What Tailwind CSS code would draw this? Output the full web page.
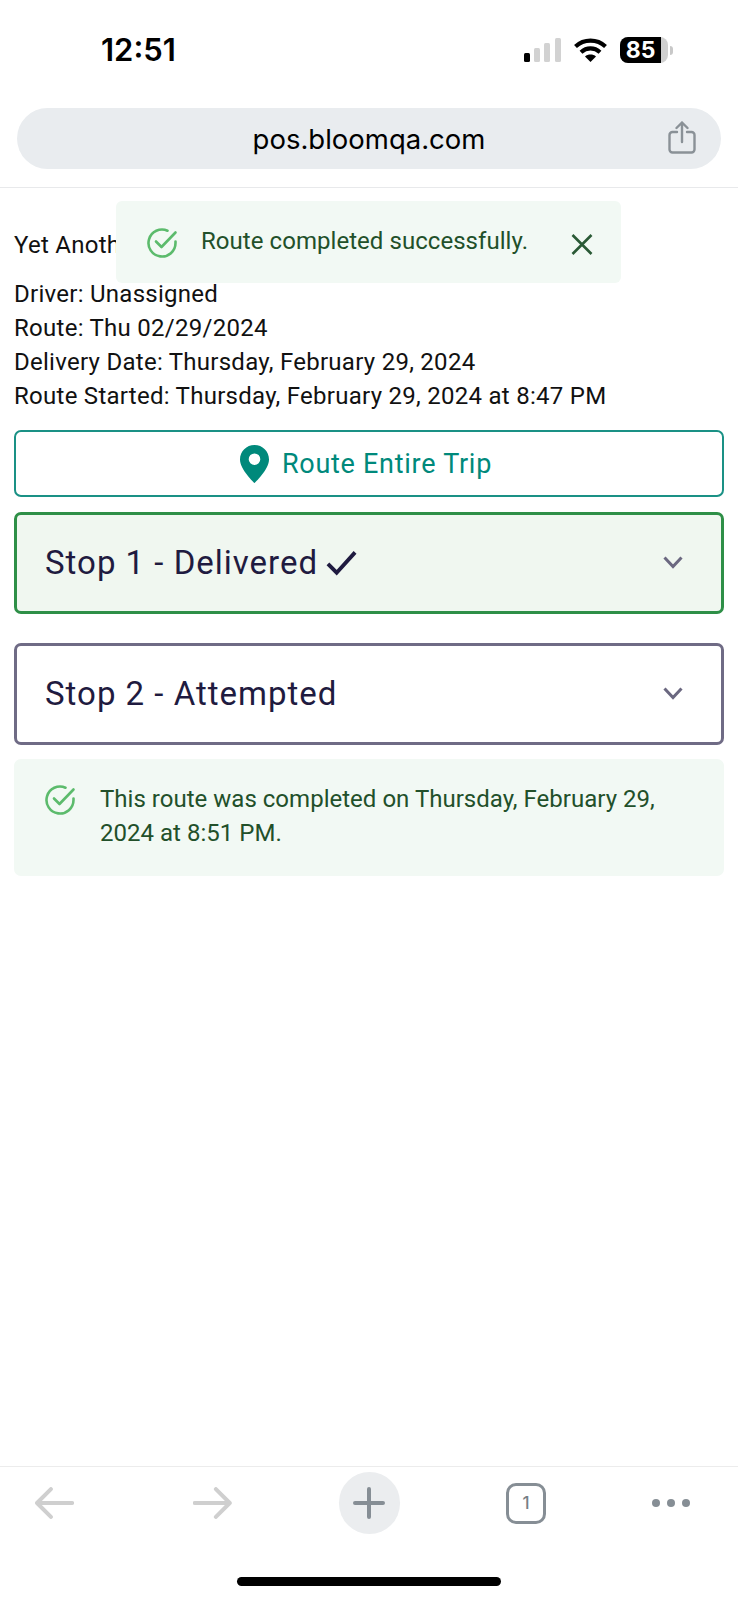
<!DOCTYPE html>
<html lang="en">
<head>
  <meta charset="utf-8">
  <meta name="viewport" content="width=device-width,initial-scale=1">
  <script src="https://cdn.jsdelivr.net/npm/@tailwindcss/browser@4"></script>
  <title>Route</title>
</head>
<body class="bg-white">
  <div class="relative flex h-[1600px] w-[738px] flex-col overflow-hidden font-['Roboto',sans-serif]">
    <!-- status bar -->
    <div class="flex h-[108px] shrink-0 items-start justify-between pt-[32px] pl-[101px] pr-[65px]">
      <span class="font-['Inter',sans-serif] text-[31px] leading-[36px] font-semibold text-black">12:51</span>
      <div class="mt-[5px] flex items-center">
        <svg width="37" height="24" viewBox="0 0 37 24">
          <rect x="0" y="15" width="6" height="9" rx="1.5" fill="#000"/>
          <rect x="10" y="10" width="6" height="14" rx="1.5" fill="#d2d2d2"/>
          <rect x="20" y="5" width="6" height="19" rx="1.5" fill="#d2d2d2"/>
          <rect x="31" y="0" width="6" height="24" rx="1.5" fill="#d2d2d2"/>
        </svg>
        <svg class="ml-[13px]" width="33" height="24" viewBox="0 0 33 24" fill="none" stroke="#000" stroke-width="4.2">
          <path d="M1.5 8.5C10 .6 23 .6 31.5 8.5"/>
          <path d="M7 14.2c5.6-5 13.4-5 19 0"/>
          <path d="M16.500 24l-5.500-5.500c3-2.600 8-2.600 11 0z" fill="#000" stroke="none"/>
        </svg>
        <div class="relative ml-[13px] flex h-[26px] w-[48px] items-center rounded-[8px] bg-[#d0d0d0]">
          <div class="absolute inset-y-0 left-0 w-[41px] rounded-l-[8px] bg-black"></div>
          <span class="relative w-[41px] text-center font-['Inter',sans-serif] text-[23px] leading-[26px] font-bold text-white">85</span>
        </div>
        <div class="ml-[2px] h-[9px] w-[3px] rounded-r-full bg-[#c8c8c8]"></div>
      </div>
    </div>

    <!-- address bar -->
    <div class="relative mx-[17px] flex h-[61px] w-[704px] shrink-0 items-center justify-center rounded-full bg-[#e9ecef]">
      <span class="font-['Inter',sans-serif] text-[27.500px] leading-[32px] text-black">pos.bloomqa.com</span>
      <svg class="absolute right-[25px] top-[13px]" width="28" height="33" viewBox="0 0 28 33" fill="none" stroke="#8a9197" stroke-width="2.400" stroke-linecap="round" stroke-linejoin="round">
        <path d="M9 11H4.500A3 3 0 0 0 1.500 14v14.500a3 3 0 0 0 3 3h19a3 3 0 0 0 3-3V14a3 3 0 0 0-3-3H19"/>
        <path d="M14 21V1.500M8.500 7 14 1.500 19.500 7"/>
      </svg>
    </div>
    <div class="mt-[18px] h-[1px] w-full shrink-0 bg-[#e8e9eb]"></div>

    <!-- page content -->
    <div class="flex flex-1 flex-col px-[14px] pt-[40px] text-[24px] leading-[34px] tracking-[0.27px] text-[#111]">
      <p class="mb-[15px]">Yet Another</p>
      <p>Driver: Unassigned</p>
      <p>Route: Thu 02/29/2024</p>
      <p>Delivery Date: Thursday, February 29, 2024</p>
      <p>Route Started: Thursday, February 29, 2024 at 8:47 PM</p>

      <button class="mt-[17px] flex h-[67px] w-[710px] items-center justify-center gap-[13px] rounded-[7px] border-2 border-[#1a9185] bg-white pr-[6px] text-[27px] font-normal tracking-[0.72px] text-[#00897b]">
        <svg width="29" height="38" viewBox="0 0 29 38">
          <path fill-rule="evenodd" fill="#00897b" d="M14.500 0C6.500 0 0 6.400 0 14.400 0 24.500 14.500 38 14.500 38S29 24.500 29 14.400C29 6.400 22.500 0 14.500 0zm0 20a5.800 5.800 0 1 1 0-11.600 5.800 5.800 0 0 1 0 11.600z"/>
        </svg>
        Route Entire Trip
      </button>

      <div class="mt-[15px] flex h-[102px] w-[710px] items-center justify-between rounded-[7px] border-[3px] border-[#2e8f47] bg-[#f0f7f0] pb-[1px] pl-[28px] pr-[38px]">
        <span class="flex items-center text-[33px] leading-[40px] font-normal tracking-[1px] text-[#1f1b40]">
          Stop 1 - Delivered
          <svg class="ml-[8px]" width="31" height="26" viewBox="0 0 32 26" fill="none" stroke="#1f1b40" stroke-width="4">
            <path d="M2 14l9 9L30 2"/>
          </svg>
        </span>
        <svg width="20" height="13" viewBox="0 0 20 13" fill="none" stroke="#6b6880" stroke-width="3">
          <path d="M1.500 1.500 10 10.500l8.500-9"/>
        </svg>
      </div>

      <div class="mt-[29px] flex h-[102px] w-[710px] items-center justify-between rounded-[7px] border-[3px] border-[#6f6b85] bg-white pb-[1px] pl-[28px] pr-[38px]">
        <span class="text-[33px] leading-[40px] font-normal tracking-[1px] text-[#1f1b40]">Stop 2 - Attempted</span>
        <svg width="20" height="13" viewBox="0 0 20 13" fill="none" stroke="#6b6880" stroke-width="3">
          <path d="M1.500 1.500 10 10.500l8.500-9"/>
        </svg>
      </div>

      <div class="mt-[14px] flex h-[117px] w-[710px] items-start rounded-[7px] bg-[#f2f9f4] pl-[30px] pt-[23px] pr-[50px] tracking-[0.02px] text-[#22502a]">
        <svg class="mt-[2px] mr-[24px] shrink-0" width="32" height="32" viewBox="0 0 32 32" fill="none" stroke="#5cbb6c" stroke-width="2.600" stroke-linecap="round" stroke-linejoin="round">
          <path d="M29.500 14.500V16A13.500 13.500 0 1 1 21.500 3.700"/>
          <path d="M10 14.500l5.500 5.500L29.500 5.500"/>
        </svg>
        <p>This route was completed on Thursday, February 29, 2024 at 8:51 PM.</p>
      </div>
    </div>

    <!-- toast over the content -->
    <div class="absolute left-[116px] top-[201px] flex h-[82px] w-[505px] items-start rounded-[6px] bg-[#f2f9f4] pl-[30px] pt-[23px] text-[24px] leading-[34px] tracking-[0.05px] text-[#22502a]">
      <svg class="mt-[3px] mr-[23px] shrink-0" width="32" height="32" viewBox="0 0 32 32" fill="none" stroke="#5cbb6c" stroke-width="2.600" stroke-linecap="round" stroke-linejoin="round">
        <path d="M29.500 14.500V16A13.500 13.500 0 1 1 21.500 3.700"/>
        <path d="M10 14.500l5.500 5.500L29.500 5.500"/>
      </svg>
      <span>Route completed successfully.</span>
      <svg class="mt-[10px] ml-[43px]" width="22" height="21" viewBox="0 0 22 21" fill="none" stroke="#2a5a35" stroke-width="2.600">
        <path d="M1.500 1 20.500 20M20.500 1 1.500 20"/>
      </svg>
    </div>

    <!-- bottom toolbar -->
    <div class="h-[1px] w-full shrink-0 bg-[#ececec]"></div>
    <div class="flex h-[133px] shrink-0 flex-col">
      <div class="mt-[5px] flex h-[62px] items-center justify-between pl-[35px] pr-[48px]">
        <svg width="39" height="32" viewBox="0 0 39 32" fill="none" stroke="#cfcfcf" stroke-width="4" stroke-linecap="round" stroke-linejoin="round">
          <path d="M37.300 16H2M16 2 2 16l14 14"/>
        </svg>
        <svg class="ml-[119px]" width="39" height="32" viewBox="0 0 39 32" fill="none" stroke="#cfcfcf" stroke-width="4" stroke-linecap="round" stroke-linejoin="round">
          <path d="M1.700 16H37M23 2l14 14-14 14"/>
        </svg>
        <div class="ml-[107px] flex h-[62px] w-[62px] items-center justify-center rounded-full bg-[#ebedef]">
          <svg width="32" height="32" viewBox="0 0 32 32" fill="none" stroke="#868e95" stroke-width="4" stroke-linecap="round">
            <path d="M16 2v28M2 16h28"/>
          </svg>
        </div>
        <div class="ml-[106px] flex h-[41px] w-[40px] items-center justify-center rounded-[10px] border-[3.500px] border-[#868e95] font-['Inter',sans-serif] text-[17px] leading-none font-medium text-[#777f86]">1</div>
        <div class="ml-[106px] flex items-center gap-[7px]">
          <span class="h-[8px] w-[8px] rounded-full bg-[#868e95]"></span>
          <span class="h-[8px] w-[8px] rounded-full bg-[#868e95]"></span>
          <span class="h-[8px] w-[8px] rounded-full bg-[#868e95]"></span>
        </div>
      </div>
      <div class="mx-auto mt-[43px] h-[9px] w-[264px] rounded-full bg-black"></div>
    </div>
  </div>
</body>
</html>
